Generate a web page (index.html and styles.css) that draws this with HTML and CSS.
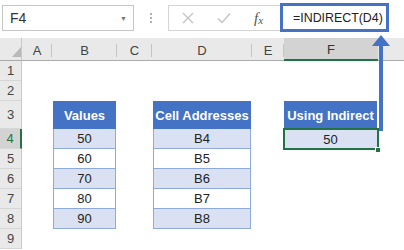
FILE: index.html
```html
<!DOCTYPE html>
<html>
<head>
<meta charset="utf-8">
<link rel="stylesheet" href="styles.css">
</head>
<body>
<div class="page">
  <div class="topbar">
    <div class="namebox"><span class="nb-text">F4</span><span class="nb-caret">&#9660;</span></div>
    <div class="dots"><i></i><i></i><i></i></div>
    <div class="fbtns">
      <svg class="ico-x" width="12" height="12" viewBox="0 0 12 12"><path d="M1 1L11 11M11 1L1 11" stroke="#c4c4c4" stroke-width="1.4" fill="none"/></svg>
      <svg class="ico-check" width="14" height="12" viewBox="0 0 14 12"><path d="M1 6.5L5 10.5L13 1.5" stroke="#c4c4c4" stroke-width="1.4" fill="none"/></svg>
      <span class="fx">f<sub>x</sub></span>
    </div>
    <div class="formula">=INDIRECT(D4)</div>
  </div>
  <div class="sheet">
    <div class="ch corner"><svg width="9" height="10" viewBox="0 0 9 10"><path d="M9 0V10H0Z" fill="#b9b9b9"/></svg></div>
    <div class="ch">A</div>
    <div class="ch">B</div>
    <div class="ch">C</div>
    <div class="ch">D</div>
    <div class="ch">E</div>
    <div class="ch ch-sel">F</div>
    <div class="ch ch-last"></div>

    <div class="rh">1</div>
    <div class="rh">2</div>
    <div class="rh">3</div>
    <div class="rh rh-sel">4</div>
    <div class="rh">5</div>
    <div class="rh">6</div>
    <div class="rh">7</div>
    <div class="rh">8</div>
    <div class="rh">9</div>

    <div class="tbl tbl-b">
      <div class="th">Values</div>
      <div class="td alt">50</div>
      <div class="td">60</div>
      <div class="td alt">70</div>
      <div class="td">80</div>
      <div class="td alt">90</div>
    </div>
    <div class="tbl tbl-d">
      <div class="th">Cell Addresses</div>
      <div class="td alt">B4</div>
      <div class="td">B5</div>
      <div class="td alt">B6</div>
      <div class="td">B7</div>
      <div class="td alt">B8</div>
    </div>
    <div class="tbl tbl-f">
      <div class="th">Using Indirect</div>
      <div class="td alt selcell">50<span class="handle"></span></div>
    </div>
  </div>
  <svg class="arrow" width="24" height="100" viewBox="0 0 24 100"><path d="M1 11H19L10 0Z" fill="#4472C4"/><rect x="8" y="10" width="4" height="86" fill="#4472C4"/></svg>
</div>
</body>
</html>
```
FILE: styles.css
```css
* { box-sizing: border-box; }
html, body { margin: 0; padding: 0; background: #fff; }
body { font-family: "Liberation Sans", Arial, sans-serif; width: 404px; height: 250px; overflow: hidden; }
.page { position: relative; width: 404px; height: 250px; }

.topbar { height: 38px; display: flex; align-items: flex-start; padding-top: 5px; background: #fff; }
.namebox { margin-left: 2px; width: 132px; height: 26px; border: 1px solid #c6c6c6; display: flex; align-items: center; justify-content: space-between; padding: 0 6px 0 7px; }
.nb-text { font-size: 14px; color: #333; }
.nb-caret { font-size: 7px; color: #777; }
.dots { width: 34px; height: 26px; display: flex; flex-direction: column; align-items: center; justify-content: center; gap: 2px; }
.dots i { display: block; width: 2px; height: 2px; background: #b0b0b0; }
.fbtns { width: 112px; height: 26px; border: 1px solid #d4d4d4; border-right: none; display: flex; align-items: center; padding-left: 13px; }
.ico-x { margin-right: 23px; }
.ico-check { margin-right: 23px; }
.fx { font-family: "Liberation Serif", serif; font-style: italic; font-size: 15px; color: #555; }
.fx sub { font-size: 11px; vertical-align: -1px; }
.formula { margin-top: -2px; width: 109px; height: 29px; border: 3px solid #4472C4; font-size: 12.4px; color: #222; display: flex; align-items: center; padding-left: 10px; white-space: nowrap; overflow: hidden; }

.sheet { display: grid; grid-template-columns: 22px 30px 65px 35px 100px 32px 94px 1fr; grid-template-rows: 23px 20px 20px 28px repeat(6, 20px); }
.ch { grid-row: 1; background: #e9e9e9 linear-gradient(#c4c4c4, #c4c4c4) right 6px / 1px 13px no-repeat; border-bottom: 1px solid #ababab; font-size: 13px; color: #444; display: flex; align-items: center; justify-content: center; padding-top: 2px; }
.corner { justify-content: flex-end; align-items: flex-end; padding: 0 0 3px 0; background: #e9e9e9; border-right: 1px solid #c8c8c8; }
.ch-sel { background: #d3d3d3; border-bottom: 2px solid #217346; color: #333; }
.ch-last { background: #e9e9e9; }
.rh { grid-column: 1; background: #e9e9e9; border-right: 1px solid #c8c8c8; border-bottom: 1px solid #d6d6d6; font-size: 13px; color: #444; display: flex; align-items: center; justify-content: center; }
.rh-sel { background: #d3d3d3; border-right: 2px solid #217346; color: #217346; }

.tbl { grid-row: 4 / span 6; align-self: start; display: flex; flex-direction: column; margin: 0 1px; font-size: 13px; color: #222; }
.tbl-b { grid-column: 3; }
.tbl-d { grid-column: 5; }
.tbl-f { grid-column: 7; margin: 0 1px 0 0; grid-row: 4 / span 2; }
.th { height: 28px; background: #4472C4; color: #fff; font-weight: bold; display: flex; align-items: center; justify-content: center; }
.td { height: 20px; border: 1px solid #8EA9DB; border-top: none; display: flex; align-items: center; justify-content: center; background: #fff; }
.td.alt { background: #D9E1F2; }
.selcell { position: relative; border: none; }
.selcell::after { content: ""; position: absolute; left: -1px; top: -1px; right: -2px; bottom: -1px; border: 2px solid #217346; }
.handle { position: absolute; right: -4px; bottom: -4px; width: 6px; height: 6px; background: #217346; border: 1px solid #fff; z-index: 2; }

.arrow { position: absolute; left: 371px; top: 35px; }
```
